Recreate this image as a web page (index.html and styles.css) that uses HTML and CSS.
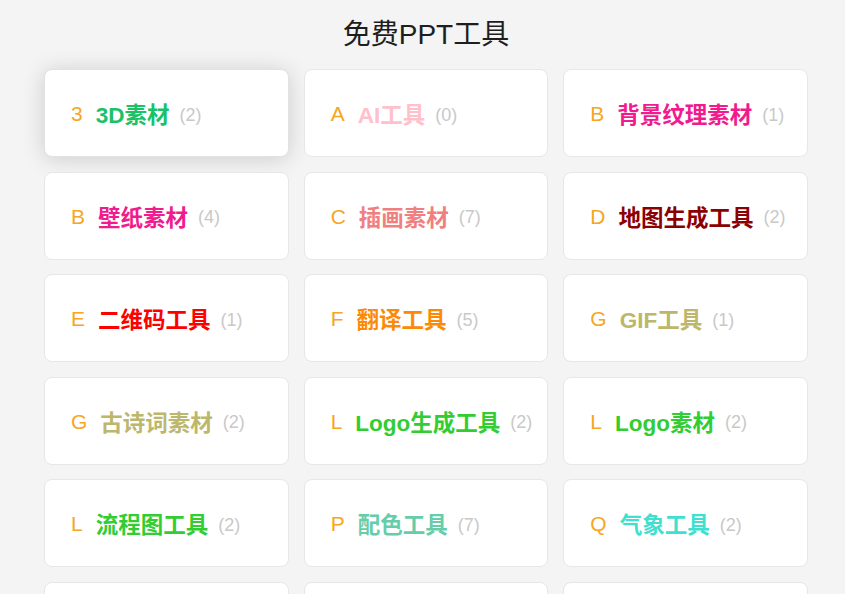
FILE: index.html
```html
<!DOCTYPE html>
<html lang="zh-CN">
<head>
<meta charset="utf-8">
<title>免费PPT工具</title>
<link rel="stylesheet" href="styles.css">
</head>
<body>
<div class="wrap">
  <h1 class="title">免费PPT工具</h1>
  <div class="grid">
    <a class="card hover"><span class="letter">3</span><span class="name c-green">3D素材</span><span class="count">(2)</span></a>
    <a class="card"><span class="letter">A</span><span class="name c-pink">AI工具</span><span class="count">(0)</span></a>
    <a class="card"><span class="letter">B</span><span class="name c-deeppink">背景纹理素材</span><span class="count">(1)</span></a>
    <a class="card"><span class="letter">B</span><span class="name c-deeppink">壁纸素材</span><span class="count">(4)</span></a>
    <a class="card"><span class="letter">C</span><span class="name c-coral">插画素材</span><span class="count">(7)</span></a>
    <a class="card"><span class="letter">D</span><span class="name c-darkred">地图生成工具</span><span class="count">(2)</span></a>
    <a class="card"><span class="letter">E</span><span class="name c-red">二维码工具</span><span class="count">(1)</span></a>
    <a class="card"><span class="letter">F</span><span class="name c-orange">翻译工具</span><span class="count">(5)</span></a>
    <a class="card"><span class="letter">G</span><span class="name c-khaki">GIF工具</span><span class="count">(1)</span></a>
    <a class="card"><span class="letter">G</span><span class="name c-khaki">古诗词素材</span><span class="count">(2)</span></a>
    <a class="card"><span class="letter">L</span><span class="name c-lime">Logo生成工具</span><span class="count">(2)</span></a>
    <a class="card"><span class="letter">L</span><span class="name c-lime">Logo素材</span><span class="count">(2)</span></a>
    <a class="card"><span class="letter">L</span><span class="name c-lime">流程图工具</span><span class="count">(2)</span></a>
    <a class="card"><span class="letter">P</span><span class="name c-aqua">配色工具</span><span class="count">(7)</span></a>
    <a class="card"><span class="letter">Q</span><span class="name c-turq">气象工具</span><span class="count">(2)</span></a>
    <a class="card"></a>
    <a class="card"></a>
    <a class="card"></a>
  </div>
</div>
</body>
</html>
```
FILE: styles.css
```css
html, body {
  margin: 0;
  padding: 0;
}
body {
  background: #f4f4f4;
  font-family: "Liberation Sans", "Noto Sans CJK SC", sans-serif;
  overflow: hidden;
}
.wrap {
  padding: 0 37px 40px 44px;
}
.title {
  margin: 15px 0 14px;
  font-size: 28px;
  line-height: 40px;
  font-weight: normal;
  color: #1e1e1e;
  text-align: center;
}
.grid {
  display: grid;
  grid-template-columns: repeat(3, 1fr);
  column-gap: 15px;
  row-gap: 14.6px;
}
.card {
  box-sizing: border-box;
  height: 88px;
  display: flex;
  align-items: center;
  padding: 0 0 0 26px;
  background: #fff;
  border: 1px solid #e7e7e7;
  border-radius: 8px;
  text-decoration: none;
  white-space: nowrap;
}
.card.hover {
  border-color: #e2e2e2;
  box-shadow: 0 2px 22px rgba(0, 0, 0, 0.16);
}
.letter {
  font-size: 21px;
  color: #f6a623;
  margin-right: 13px;
  margin-top: 2px;
}
.name {
  font-size: 22.5px;
  font-weight: bold;
}
.count {
  font-size: 18px;
  color: #c9c9c9;
  margin-left: 10px;
  margin-top: 4px;
}
.c-green { color: #19c266; }
.c-pink { color: #ffc0cb; }
.c-deeppink { color: #f11a8e; }
.c-coral { color: #f08080; }
.c-darkred { color: #8b0000; }
.c-red { color: #ff0000; }
.c-orange { color: #fb8a06; }
.c-khaki { color: #bdb76b; }
.c-lime { color: #32cd32; }
.c-aqua { color: #66cdaa; }
.c-turq { color: #40e0d0; }
```
